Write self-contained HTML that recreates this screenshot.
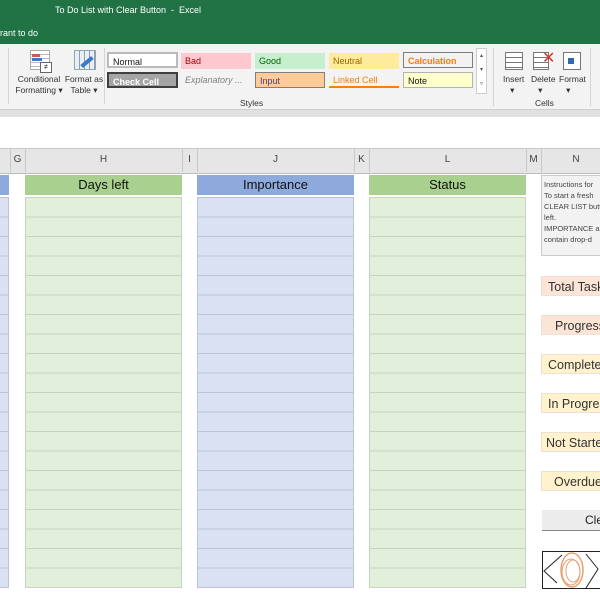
<!DOCTYPE html><html><head><style>
body{margin:0;width:600px;height:600px;overflow:hidden;position:relative;font-family:"Liberation Sans",sans-serif;background:#fff}
.a{position:absolute}
.t{font-size:8.5px;color:#333;white-space:nowrap}
.col{position:absolute;top:197px;height:391px;background-color:#e2efda;background-image:repeating-linear-gradient(to bottom,transparent 0,transparent 18.5px,#c6d3bf 18.5px,#c6d3bf 19.5px);border:1px solid #c8d4c0;box-sizing:border-box}
.blue{background-color:#d9e1f2;background-image:repeating-linear-gradient(to bottom,transparent 0,transparent 18.5px,#bcc5d6 18.5px,#bcc5d6 19.5px);border-color:#bcc5d6}
.hd{position:absolute;top:175px;height:20px;font-size:13px;text-align:center;line-height:20px;color:#111}
.ch{position:absolute;top:148px;height:24px;line-height:24px;font-size:10px;color:#444;text-align:center;border-right:1px solid #c8c8c8}
.st{position:absolute;height:16px;font-size:9px;line-height:16px;padding-left:4px;box-sizing:border-box}
.bx{position:absolute;left:541px;width:70px;height:20px;font-size:12.5px;line-height:20px;color:#333;padding-left:6px;box-sizing:border-box;border:1px solid #eee0d2}
</style></head><body>
<div class="a" style="left:0;top:0;width:600px;height:44px;background:#217346"></div>
<div class="a" style="left:55px;top:5px;font-size:9px;color:#fff">To Do List with Clear Button &nbsp;-&nbsp; Excel</div>
<div class="a" style="left:0;top:28px;font-size:9px;color:#fff">rant to do</div>
<div class="a" style="left:0;top:44px;width:600px;height:66px;background:#f3f3f3"></div>
<div class="a" style="left:8px;top:48px;width:1px;height:56px;background:#d4d4d4"></div>
<div class="a" style="left:30px;top:50px;width:18px;height:18px;background:repeating-linear-gradient(#fff 0 3px,#bbb 3px 4px);border:1px solid #aaa"></div>
<div class="a" style="left:32px;top:54px;width:8px;height:3px;background:#d9534f"></div>
<div class="a" style="left:32px;top:58px;width:10px;height:3px;background:#3a78c9"></div>
<div class="a" style="left:40px;top:62px;width:10px;height:9px;background:#fff;border:1px solid #666;font-size:7px;line-height:9px;text-align:center">≠</div>
<div class="a t" style="left:14px;top:74px;text-align:center;line-height:11px;width:50px">Conditional<br>Formatting ▾</div>
<div class="a" style="left:74px;top:50px;width:20px;height:18px;border:1px solid #8aa;background:repeating-linear-gradient(90deg,#e8eef6 0 4px,#99a 4px 5px)"></div>
<div class="a" style="left:80px;top:60px;width:14px;height:4px;background:#3a78c9;transform:rotate(-40deg)"></div>
<div class="a t" style="left:62px;top:74px;text-align:center;line-height:11px;width:44px">Format as<br>Table ▾</div>
<div class="a" style="left:104px;top:48px;width:1px;height:56px;background:#d4d4d4"></div>
<div class="st" style="left:107px;top:52px;width:71px;background:#fff;border:2px solid #bbb;color:#111">Normal</div>
<div class="st" style="left:181px;top:53px;width:70px;background:#ffc7ce;color:#9c0006">Bad</div>
<div class="st" style="left:255px;top:53px;width:70px;background:#c6efce;color:#006100">Good</div>
<div class="st" style="left:329px;top:53px;width:70px;background:#ffeb9c;color:#9c6500">Neutral</div>
<div class="st" style="left:403px;top:52px;width:70px;background:#f2f2f2;border:1px solid #7f7f7f;color:#fa7d00;font-weight:bold">Calculation</div>
<div class="st" style="left:107px;top:72px;width:71px;background:#a5a5a5;border:2px solid #3f3f3f;color:#fff;font-weight:bold">Check Cell</div>
<div class="st" style="left:181px;top:72px;width:70px;color:#7f7f7f;font-style:italic">Explanatory ...</div>
<div class="st" style="left:255px;top:72px;width:70px;background:#ffcc99;border:1px solid #7f7f7f;color:#3f3f76">Input</div>
<div class="st" style="left:329px;top:72px;width:70px;color:#fa7d00;border-bottom:2px solid #ff8001">Linked Cell</div>
<div class="st" style="left:403px;top:72px;width:70px;background:#ffffcc;border:1px solid #b2b2b2;color:#111">Note</div>
<div class="a" style="left:476px;top:48px;width:9px;height:44px;background:#fff;border:1px solid #ccc;font-size:6px;text-align:center;line-height:14px;color:#555">▴<br>▾<br>▿</div>
<div class="a t" style="left:240px;top:98px">Styles</div>
<div class="a" style="left:493px;top:48px;width:1px;height:58px;background:#d4d4d4"></div>
<div class="a" style="left:505px;top:52px;width:16px;height:16px;border:1px solid #777;background:repeating-linear-gradient(#fff 0 4px,#777 4px 5px)"></div>
<div class="a t" style="left:503px;top:74px;line-height:11px">Insert<br>&nbsp;&nbsp;&nbsp;▾</div>
<div class="a" style="left:533px;top:52px;width:14px;height:16px;border:1px solid #777;background:repeating-linear-gradient(#fff 0 4px,#777 4px 5px)"></div>
<div class="a" style="left:542px;top:48px;color:#d9352a;font-size:16px">✕</div>
<div class="a t" style="left:531px;top:74px;line-height:11px">Delete<br>&nbsp;&nbsp;&nbsp;▾</div>
<div class="a" style="left:563px;top:52px;width:16px;height:16px;border:1px solid #777;background:#fff"></div>
<div class="a" style="left:568px;top:58px;width:6px;height:6px;background:#2f6bb5"></div>
<div class="a t" style="left:559px;top:74px;line-height:11px">Format<br>&nbsp;&nbsp;&nbsp;▾</div>
<div class="a t" style="left:535px;top:98px">Cells</div>
<div class="a" style="left:590px;top:48px;width:1px;height:58px;background:#d4d4d4"></div>
<div class="a" style="left:0;top:109px;width:600px;height:7px;background:#e1e1e1;border-top:1px solid #d0d0d0"></div>
<div class="a" style="left:0;top:148px;width:600px;height:24px;background:#e6e6e6;border-top:1px solid #c8c8c8;border-bottom:1px solid #bdbdbd"></div>
<div class="ch" style="left:0;width:10px"></div>
<div class="ch" style="left:10px;width:15px">G</div>
<div class="ch" style="left:25px;width:157px">H</div>
<div class="ch" style="left:182px;width:15px">I</div>
<div class="ch" style="left:197px;width:157px">J</div>
<div class="ch" style="left:354px;width:15px">K</div>
<div class="ch" style="left:369px;width:157px">L</div>
<div class="ch" style="left:526px;width:15px">M</div>
<div class="ch" style="left:541px;width:70px">N</div>
<div class="hd" style="left:0;width:9px;background:#8ea9db"></div>
<div class="hd" style="left:25px;width:157px;background:#a9d08e">Days left</div>
<div class="hd" style="left:197px;width:157px;background:#8ea9db">Importance</div>
<div class="hd" style="left:369px;width:157px;background:#a9d08e">Status</div>
<div class="col blue" style="left:-1px;width:10px"></div>
<div class="col" style="left:25px;width:157px"></div>
<div class="col blue" style="left:197px;width:157px"></div>
<div class="col" style="left:369px;width:157px"></div>
<div class="a" style="left:541px;top:175px;width:70px;height:81px;background:#f2f2f2;border:1px solid #ccc;font-size:7.5px;line-height:11px;color:#444;padding:3px 2px;box-sizing:border-box;white-space:nowrap">Instructions for<br>To start a fresh<br>CLEAR LIST butt<br>left.<br>IMPORTANCE a<br>contain drop-d</div>
<div class="bx" style="top:276px;background:#fce4d6">Total Task</div>
<div class="bx" style="top:315px;background:#fce4d6;padding-left:13px">Progress</div>
<div class="bx" style="top:354px;background:#fff2cc;padding-left:6px">Complete</div>
<div class="bx" style="top:393px;background:#fff2cc">In Progres</div>
<div class="bx" style="top:432px;background:#fff2cc;padding-left:4px">Not Starte</div>
<div class="bx" style="top:471px;background:#fff2cc;padding-left:12px">Overdue</div>
<div class="a" style="left:542px;top:510px;width:70px;height:21px;background:#ececec;border-bottom:1px solid #888;font-size:12px;line-height:21px;color:#222;padding-left:43px;box-sizing:border-box">Cle</div>
<svg class="a" style="left:542px;top:551px" width="60" height="38"><rect x="0.5" y="0.5" width="70" height="37" fill="#fff" stroke="#222"/><path d="M20 4 L2 20 L15 32 M44 3 L56 18 L44 37" stroke="#222" fill="none"/><ellipse cx="30" cy="19" rx="11" ry="17" fill="none" stroke="#e8a070" stroke-width="1.5"/><ellipse cx="29" cy="21" rx="9" ry="13" fill="none" stroke="#e8a070"/><ellipse cx="31" cy="20" rx="7" ry="11" fill="none" stroke="#e8a070"/></svg>
</body></html>
